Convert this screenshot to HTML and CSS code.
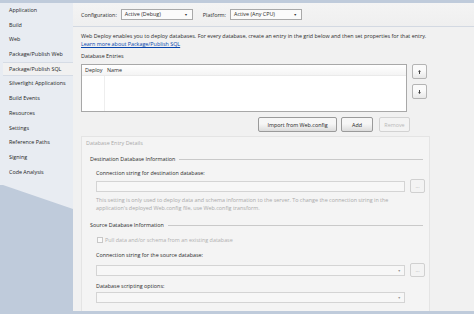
FILE: index.html
```html
<!DOCTYPE html>
<html lang="en">

<head>
    <meta charset="UTF-8">
    <title>Package/Publish SQL</title>
    <link rel="stylesheet" href="styles.css">
</head>

<body>
    <div class="shell">
        <nav class="tabs">
            <div class="tab">Application</div>
            <div class="tab">Build</div>
            <div class="tab">Web</div>
            <div class="tab">Package/Publish Web</div>
            <div class="tab active">Package/Publish SQL</div>
            <div class="tab">Silverlight Applications</div>
            <div class="tab">Build Events</div>
            <div class="tab">Resources</div>
            <div class="tab">Settings</div>
            <div class="tab">Reference Paths</div>
            <div class="tab">Signing</div>
            <div class="tab">Code Analysis</div>
        </nav>

        <main class="page">
            <div class="toolbar">
                <span class="label">Configuration:</span>
                <div class="select">Active (Debug)<span class="arrow">&#9660;</span></div>
                <span class="label platform">Platform:</span>
                <div class="select">Active (Any CPU)<span class="arrow">&#9660;</span></div>
            </div>

            <div class="content">
                <p class="text">Web Deploy enables you to deploy databases. For every database, create an entry in the grid below and then set properties for that entry.</p>
                <a class="link" href="#">Learn more about Package/Publish SQL</a>
                <p class="text caption">Database Entries</p>

                <div class="entries">
                    <div class="grid">
                        <div class="grid-head">
                            <span class="col-deploy">Deploy</span>
                            <span>Name</span>
                        </div>
                        <div class="grid-body">
                            <div class="col-line"></div>
                        </div>
                    </div>
                    <div class="movers">
                        <button class="btn square">
                            <svg width="3" height="4" viewBox="0 0 3 4"><path d="M1.5 0 L3 1.7 H2 V4 H1 V1.7 H0 Z" fill="#444"/></svg>
                        </button>
                        <button class="btn square">
                            <svg width="3" height="4" viewBox="0 0 3 4"><path d="M1.5 4 L3 2.3 H2 V0 H1 V2.3 H0 Z" fill="#444"/></svg>
                        </button>
                    </div>
                </div>

                <div class="actions">
                    <button class="btn import">Import from Web.config</button>
                    <button class="btn add">Add</button>
                    <button class="btn remove" disabled>Remove</button>
                </div>

                <section class="details">
                    <p class="text muted">Database Entry Details</p>

                    <div class="group-title"><span>Destination Database Information</span></div>
                    <div class="group">
                        <p class="text">Connection string for destination database:</p>
                        <div class="field-row">
                            <div class="input"></div>
                            <button class="btn dots">...</button>
                        </div>
                        <p class="text muted help">This setting is only used to deploy data and schema information to the server. To change the connection string in the<br>application's deployed Web.config file, use Web.config transform.</p>
                    </div>

                    <div class="group-title source"><span>Source Database Information</span></div>
                    <div class="group">
                        <label class="check"><span class="box"></span>Pull data and/or schema from an existing database</label>
                        <p class="text">Connection string for the source database:</p>
                        <div class="field-row">
                            <div class="input combo"><span class="arrow">&#9660;</span></div>
                            <button class="btn dots">...</button>
                        </div>
                        <p class="text scripting">Database scripting options:</p>
                        <div class="field-row">
                            <div class="input combo"><span class="arrow">&#9660;</span></div>
                        </div>
                    </div>
                </section>
            </div>
        </main>
    </div>
</body>

</html>
```

FILE: styles.css
```css
* {
    box-sizing: border-box;
    margin: 0;
    padding: 0;
}

body {
    width: 474px;
    height: 314px;
    overflow: hidden;
    background: #bfcbdb;
    font-family: "Open Sans", "Noto Sans", sans-serif;
    font-size: 5.4px;
    color: #2b2b2b;
}

.shell {
    display: flex;
    height: 311px;
    padding-top: 3px;
}

/* left tab strip */
.tabs {
    width: 73px;
    flex-shrink: 0;
    padding-left: 3px;
    background: #e8ecf2;
    clip-path: polygon(0 0, 100% 0, 100% 206px, 3px 182px, 0 182px);
}

.tab {
    height: 14.7px;
    line-height: 14.7px;
    padding-left: 6px;
    color: #1e1e1e;
    white-space: nowrap;
}

.tab.active {
    background: #f1f1f1;
    margin-right: -1px;
    border-top: 1px solid #d6dce5;
    border-bottom: 1px solid #d6dce5;
    line-height: 12.7px;
}

/* right page */
.page {
    flex: 1;
    background: #f1f1f1;
    display: flex;
    flex-direction: column;
    overflow: hidden;
}

.toolbar {
    height: 26px;
    display: flex;
    align-items: center;
    padding-left: 8px;
    background: linear-gradient(#f4f4f4, #efefef);
    border-bottom: 1px solid #d3d9e2;
}

.label {
    margin-right: 4px;
}

.label.platform {
    margin-left: 10px;
}

.select {
    position: relative;
    width: 72px;
    height: 11px;
    line-height: 9px;
    padding-left: 3px;
    background: #fbfbfb;
    border: 1px solid #a9a9a9;
}

.arrow {
    position: absolute;
    right: 4px;
    top: 0;
    font-size: 3.5px;
    color: #333;
}

.content {
    padding: 5px 0 0 8px;
}

.text {
    line-height: 8px;
}

.link {
    display: block;
    line-height: 8px;
    color: #0645ad;
    text-decoration: underline;
}

.caption {
    margin-top: 4px;
}

.entries {
    display: flex;
    gap: 5px;
    margin-top: 4px;
}

.grid {
    width: 326px;
    height: 48px;
    background: #fff;
    border: 1px solid #a8a8a8;
    display: flex;
    flex-direction: column;
}

.grid-head {
    height: 11px;
    line-height: 10px;
    display: flex;
    padding-left: 3px;
    border-bottom: 1px solid #eaeaea;
    background: linear-gradient(#fff, #f4f4f4);
}

.col-deploy {
    width: 22px;
}

.grid-body {
    flex: 1;
    padding-left: 22px;
}

.col-line {
    width: 1px;
    height: 100%;
    background: #eeeeee;
}

.movers {
    display: flex;
    flex-direction: column;
    gap: 5px;
}

.btn {
    font-family: inherit;
    font-size: inherit;
    color: #1e1e1e;
    border: 1px solid #9a9a9a;
    border-radius: 2px;
    background: linear-gradient(#f6f6f6 45%, #dcdcdc);
}

.btn.square {
    width: 15px;
    height: 15px;
    display: flex;
    align-items: center;
    justify-content: center;
    border-color: #b4b4b4;
    background: linear-gradient(#fafafa 45%, #e8e8e8);
}

.actions {
    display: flex;
    gap: 4px;
    margin: 5px 0 0 177px;
}

.actions .btn {
    height: 15px;
}

.btn.import {
    width: 79px;
}

.btn.add {
    width: 32px;
}

.btn.remove {
    width: 31px;
    margin-left: 2px;
    color: #b9b9b9;
    border-color: #d2d2d2;
    background: #f3f3f3;
}

/* details group */
.details {
    width: 349px;
    height: 175px;
    margin-top: 4px;
    padding: 2px 0 0 4px;
    background: #f4f4f4;
    border: 1px solid #e4e4e4;
    border-bottom: none;
}

.muted {
    color: #a9a9a9;
}

.group-title {
    display: flex;
    align-items: center;
    gap: 4px;
    margin: 8px 6px 0 4px;
    line-height: 8px;
}

.group-title::after {
    content: "";
    flex: 1;
    height: 1px;
    background: #c9c9c9;
}

.group-title.source {
    margin-top: 9px;
}

.group {
    padding-left: 10px;
}

.group > .text:first-child {
    margin-top: 6px;
}

.field-row {
    display: flex;
    align-items: center;
    gap: 5px;
    margin-top: 2px;
}

.input {
    position: relative;
    width: 309px;
    height: 11px;
    background: #f7f7f7;
    border: 1px solid #d4d4d4;
}

.input .arrow {
    top: 2px;
    right: 3px;
    color: #9a9a9a;
}

.btn.dots {
    width: 15px;
    height: 14px;
    color: #aaa;
    border-color: #d0d0d0;
    background: #f3f3f3;
    line-height: 8px;
}

.help {
    margin-top: 3px;
    white-space: nowrap;
}

.check {
    display: flex;
    align-items: center;
    gap: 2px;
    margin: 7px 0 0 1px;
    line-height: 8px;
    color: #b0b0b0;
}

.box {
    width: 6px;
    height: 6px;
    border: 1px solid #c8c8c8;
    background: #fafafa;
}

.check + .text {
    margin-top: 7px;
}

.field-row + .scripting {
    margin-top: 5px;
}

.group:last-child .field-row:nth-of-type(1) {
    margin-top: 4px;
}
```
